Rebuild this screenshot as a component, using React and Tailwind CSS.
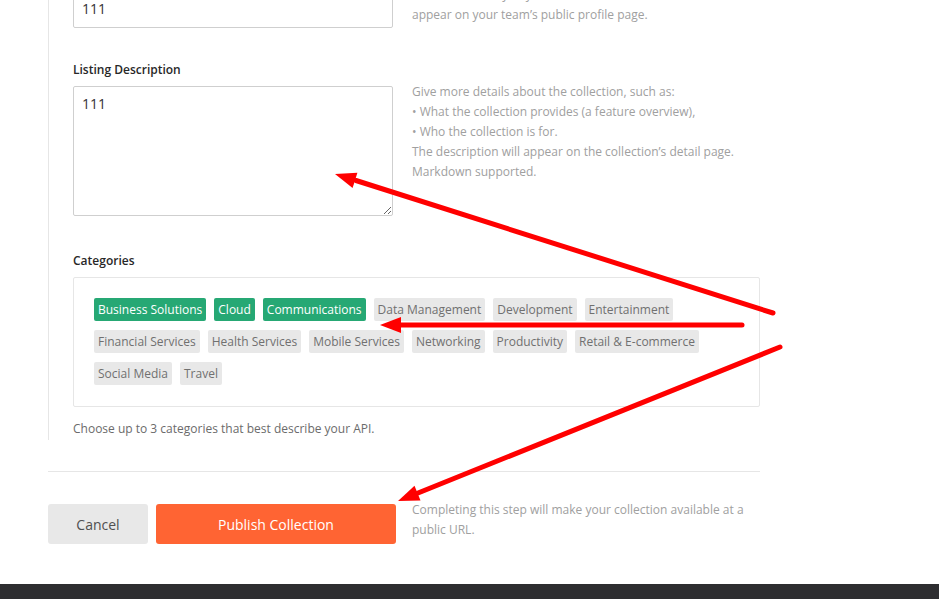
import React from 'react';

const categories = [
  { name: 'Business Solutions', selected: true },
  { name: 'Cloud', selected: true },
  { name: 'Communications', selected: true },
  { name: 'Data Management' },
  { name: 'Development' },
  { name: 'Entertainment' },
  { name: 'Financial Services' },
  { name: 'Health Services' },
  { name: 'Mobile Services' },
  { name: 'Networking' },
  { name: 'Productivity' },
  { name: 'Retail & E-commerce' },
  { name: 'Social Media' },
  { name: 'Travel' },
];

function Arrows() {
  return (
    <svg
      className="absolute top-0 left-0 pointer-events-none"
      width="939"
      height="599"
      viewBox="0 0 939 599"
    >
      <g stroke="#ff0000" strokeWidth="5" strokeLinecap="round" fill="#ff0000">
        <line x1="773" y1="313" x2="356" y2="180.5" />
        <polygon points="335,174 357.4,172.7 352.6,188" stroke="none" />
        <line x1="742" y1="325" x2="400" y2="325" />
        <polygon points="380,325 401,317 401,333" stroke="none" />
        <line x1="780" y1="347" x2="418" y2="493" />
        <polygon points="398,501 420.5,500.6 414.5,485.8" stroke="none" />
      </g>
    </svg>
  );
}

export default function App() {
  return (
    <div className="relative h-[599px] overflow-hidden bg-white font-['Open_Sans',sans-serif]">
      <div className="-mt-[13px] ml-[48px] w-[712px]">
        <div className="border-l border-[#e6e6e6] pl-[24px] pb-[3px]">
          {/* summary field, mostly scrolled away */}
          <div className="flex items-start">
            <div className="w-[320px] shrink-0 h-[41px] border border-[#cfcfcf] rounded-[2px] px-2 pt-[11px] text-[14px] leading-[20px] text-[#333]">
              111
            </div>
            <div className="ml-[19px] -mt-[2px] w-[350px] text-[12px] leading-[20px] text-[#a0a0a0]">
              <div>A short summary of your collection. This will</div>
              <div>appear on your team&rsquo;s public profile page.</div>
            </div>
          </div>

          {/* listing description */}
          <div className="mt-[34px] flex items-start">
            <div className="w-[320px] shrink-0">
              <div className="text-[12px] leading-[16px] font-semibold text-[#282828] mb-[8px]">
                Listing Description
              </div>
              <textarea
                className="block w-full h-[130px] border border-[#cfcfcf] rounded-[2px] px-2 pt-[7px] text-[14px] leading-[20px] text-[#333] outline-none"
                defaultValue="111"
              />
            </div>
            <div className="ml-[19px] mt-[20px] w-[350px] text-[12px] leading-[20px] text-[#a0a0a0]">
              <div>Give more details about the collection, such as:</div>
              <div>• What the collection provides (a feature overview),</div>
              <div>• Who the collection is for.</div>
              <div>The description will appear on the collection&rsquo;s detail page.</div>
              <div>Markdown supported.</div>
            </div>
          </div>

          {/* categories */}
          <div className="mt-[37px]">
            <div className="text-[12px] leading-[16px] font-semibold text-[#282828] mb-[8px]">
              Categories
            </div>
            <div className="w-[687px] border border-[#e6e6e6] rounded-[2px] p-[20px] h-[130px]">
              <div className="flex flex-wrap gap-x-[8px] gap-y-[9px]">
                {categories.map((c) => (
                  <span
                    key={c.name}
                    className={
                      c.selected
                        ? 'px-[4px] h-[23px] leading-[23px] text-[12px] rounded-[2px] bg-[#26a874] text-white'
                        : 'px-[4px] h-[23px] leading-[23px] text-[12px] rounded-[2px] bg-[#e8e8e8] text-[#707070]'
                    }
                  >
                    {c.name}
                  </span>
                ))}
              </div>
            </div>
            <div className="mt-[14px] text-[12px] leading-[16px] text-[#6b6b6b]">
              Choose up to 3 categories that best describe your API.
            </div>
          </div>
        </div>

        <div className="mt-[31px] border-t border-[#e6e6e6]" />

        <div className="mt-[32px] flex items-start">
          <button className="w-[100px] h-[40px] rounded-[3px] bg-[#e8e8e8] text-[14px] text-[#505050]">
            Cancel
          </button>
          <button className="ml-[8px] w-[240px] h-[40px] rounded-[3px] bg-[#ff6433] text-[14px] font-medium text-white">
            Publish Collection
          </button>
          <div className="ml-[16px] -mt-[4px] w-[340px] text-[12px] leading-[20px] text-[#a0a0a0]">
            Completing this step will make your collection available at a public URL.
          </div>
        </div>
      </div>

      <div className="mt-[40px] h-[60px] bg-[#2d2d30]" />

      <Arrows />
    </div>
  );
}
